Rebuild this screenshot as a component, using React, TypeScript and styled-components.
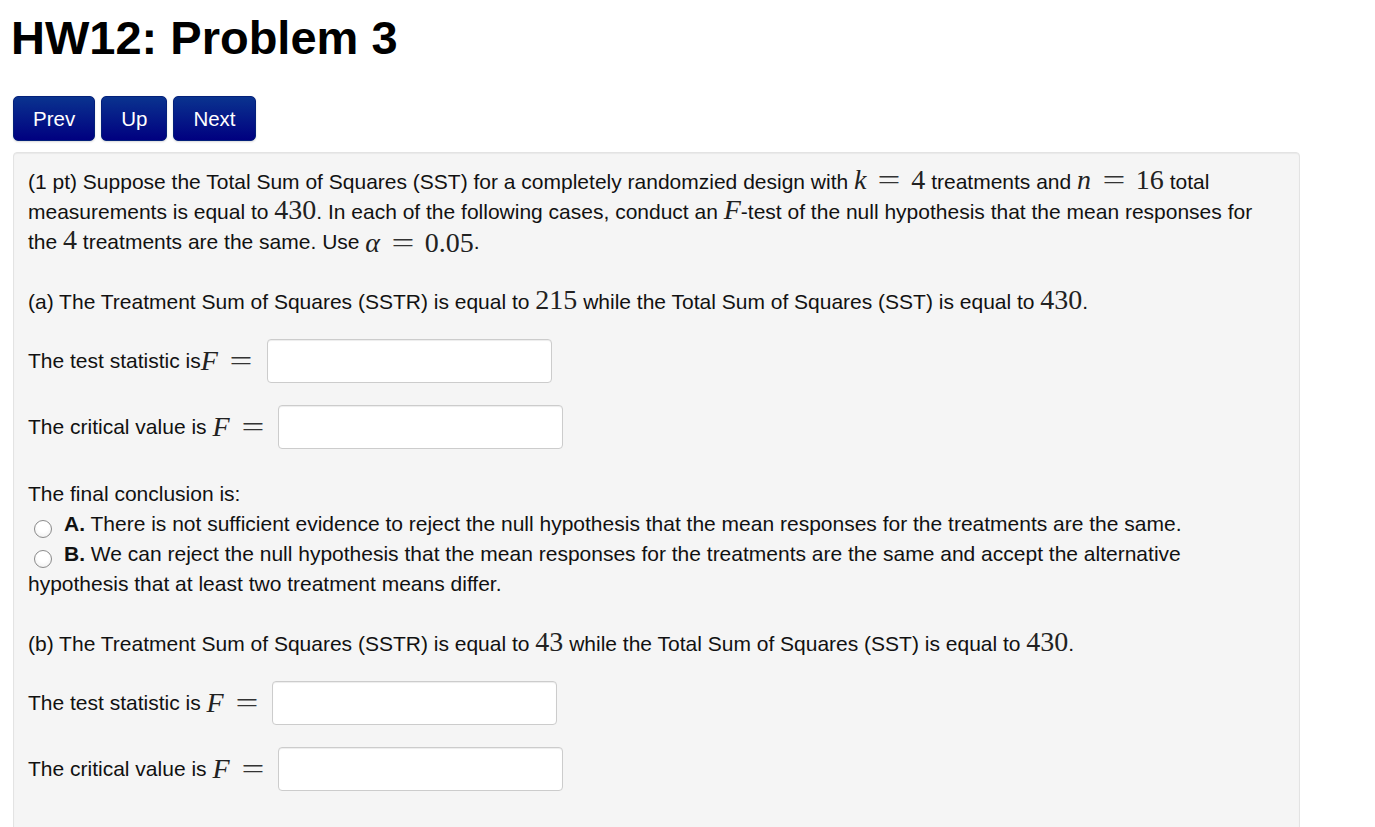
import * as React from "react";
import styled, { createGlobalStyle } from "styled-components";

const GlobalStyle = createGlobalStyle`
  html, body {
    margin: 0;
    padding: 0;
    background: #ffffff;
  }
  body {
    font-family: "Liberation Sans", Arial, sans-serif;
    color: #111111;
  }
`;

const Page = styled.div`
  display: flex;
  flex-direction: column;
  align-items: flex-start;
  padding: 0 75px 0 13px;
`;

const Title = styled.h1`
  margin: 13px 0 0 -2px;
  font-size: 47px;
  line-height: 50px;
  font-weight: 700;
  color: #000000;
`;

const Nav = styled.nav`
  display: flex;
  gap: 6px;
  margin-top: 33px;
`;

const NavButton = styled.button`
  height: 45px;
  padding: 0 19px;
  border: 1px solid #04207a;
  border-radius: 5px;
  background: linear-gradient(#0a338f, #000080);
  color: #ffffff;
  font-family: "Liberation Sans", Arial, sans-serif;
  font-size: 20.5px;
  box-shadow: 0 1px 2px rgba(0, 0, 0, 0.15);
  cursor: pointer;
`;

const Well = styled.div`
  align-self: stretch;
  display: flex;
  flex-direction: column;
  gap: 22px;
  margin-top: 11px;
  padding: 14px 20px 60px 14px;
  background: #f5f5f5;
  border: 1px solid #e3e3e3;
  border-radius: 4px;
  box-shadow: inset 0 1px 1px rgba(0, 0, 0, 0.05);
  font-size: 21px;
  line-height: 30px;
`;

const Para = styled.div<{ $section?: boolean }>`
  margin-top: ${(p) => (p.$section ? 8 : 0)}px;
`;

const AnswerRow = styled.div`
  display: flex;
  align-items: center;
  height: 44px;
  white-space: pre;
`;

const AnswerBox = styled.input`
  width: 285px;
  height: 44px;
  box-sizing: border-box;
  margin-left: 4px;
  border: 1px solid #cccccc;
  border-radius: 4px;
  background: #ffffff;
  box-shadow: inset 0 1px 1px rgba(0, 0, 0, 0.075);
  font-size: 18px;
  padding: 0 8px;
`;

const M = styled.span<{ $low?: boolean }>`
  font-family: "Liberation Serif", "Times New Roman", serif;
  font-size: 28px;
  line-height: 0;
  color: #222222;
  vertical-align: ${(p) => (p.$low ? "-3px" : "baseline")};
`;

const V = styled.i`
  font-style: italic;
`;

/* TeX's "=" is much wider than the Times one: stretch it */
const Rel = styled.span`
  display: inline-block;
  color: #333333;
  margin: 0 14px 0 15px;
  transform: scaleX(1.45);
`;

const Radio = styled.span`
  display: inline-block;
  width: 18px;
  height: 18px;
  box-sizing: border-box;
  margin: 0 12px 0 6px;
  vertical-align: -7px;
  border: 1px solid #8a8a8a;
  border-radius: 50%;
  background: radial-gradient(circle at 50% 35%, #ffffff 40%, #ececec 100%);
`;

const Letter = styled.b`
  font-weight: 700;
`;

const FEq: React.FC = () => (
  <M>
    <V>F</V>
    <Rel>=</Rel>
  </M>
);

export default function App() {
  return (
    <Page>
      <GlobalStyle />
      <Title>HW12: Problem 3</Title>
      <Nav>
        <NavButton>Prev</NavButton>
        <NavButton>Up</NavButton>
        <NavButton>Next</NavButton>
      </Nav>
      <Well>
        <Para>
          (1 pt) Suppose the Total Sum of Squares (SST) for a completely randomzied design with{" "}
          <M>
            <V>k</V>
            <Rel>=</Rel>4
          </M>{" "}
          treatments and{" "}
          <M>
            <V>n</V>
            <Rel>=</Rel>16
          </M>{" "}
          total measurements is equal to <M>430</M>. In each of the following cases, conduct an{" "}
          <M>
            <V>F</V>
          </M>
          -test of the null hypothesis that the mean responses for the <M>4</M> treatments are the
          same. Use{" "}
          <M $low>
            <V>α</V>
            <Rel>=</Rel>0.05
          </M>
          .
        </Para>
        <Para $section>
          (a) The Treatment Sum of Squares (SSTR) is equal to <M>215</M> while the Total Sum of
          Squares (SST) is equal to <M>430</M>.
        </Para>
        <AnswerRow>
          The test statistic is<FEq />
          <AnswerBox />
        </AnswerRow>
        <AnswerRow>
          The critical value is <FEq />
          <AnswerBox />
        </AnswerRow>
        <Para $section>
          The final conclusion is:
          <br />
          <Radio />
          <Letter>A.</Letter> There is not sufficient evidence to reject the null hypothesis that
          the mean responses for the treatments are the same.
          <br />
          <Radio />
          <Letter>B.</Letter> We can reject the null hypothesis that the mean responses for the
          treatments are the same and accept the alternative hypothesis that at least two treatment
          means differ.
        </Para>
        <Para $section>
          (b) The Treatment Sum of Squares (SSTR) is equal to <M>43</M> while the Total Sum of
          Squares (SST) is equal to <M>430</M>.
        </Para>
        <AnswerRow>
          The test statistic is <FEq />
          <AnswerBox />
        </AnswerRow>
        <AnswerRow>
          The critical value is <FEq />
          <AnswerBox />
        </AnswerRow>
      </Well>
    </Page>
  );
}
